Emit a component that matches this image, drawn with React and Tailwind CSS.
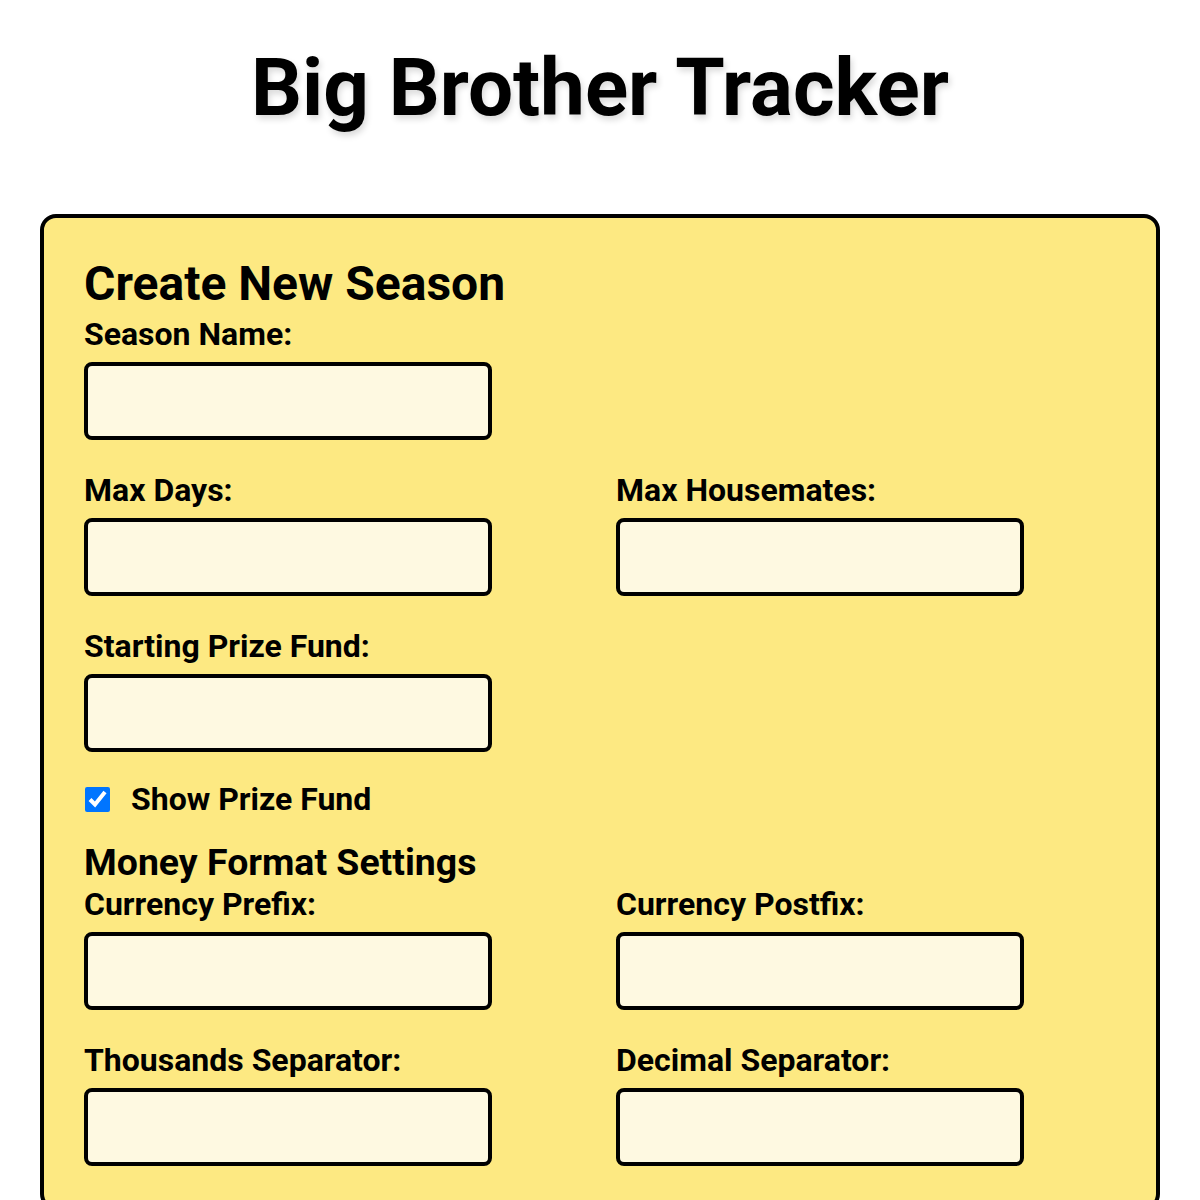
export default function App() {
  const Field = ({ label }) => (
    <div className="flex flex-col">
      <label className="text-[32px] font-bold leading-[37px]">{label}</label>
      <input type="text" className="mt-[9px] w-[408px] h-[78px] bg-[#fef9e1] border-[4px] border-black rounded-[8px] outline-none" />
    </div>
  );
  return (
    <div className="min-h-[1200px] bg-white text-black" style={{ fontFamily: "Roboto, 'Liberation Sans', sans-serif" }}>
      <h1 className="text-center text-[80px] font-bold leading-[94px] pt-[41px] [text-shadow:2px_4px_6px_rgba(0,0,0,0.15)]">Big Brother Tracker</h1>
      <div className="mx-[40px] mt-[79px] bg-[#fde982] border-[4px] border-black rounded-[16px] px-[40px] pt-[38px] pb-[40px]">
        <h2 className="text-[48px] font-bold leading-[56px]">Create New Season</h2>
        <div className="mt-[4px]">
          <Field label="Season Name:" />
        </div>
        <div className="grid grid-cols-[532px_1fr] mt-[32px]">
          <Field label="Max Days:" />
          <Field label="Max Housemates:" />
        </div>
        <div className="mt-[32px]">
          <Field label="Starting Prize Fund:" />
        </div>
        <div className="flex items-center mt-[29px]">
          <input type="checkbox" defaultChecked className="w-[25px] h-[25px] m-0 ml-[1px] accent-[#0075ff]" />
          <span className="ml-[21px] text-[32px] font-bold leading-[37px]">Show Prize Fund</span>
        </div>
        <h3 className="mt-[22px] text-[37.44px] font-bold leading-[44px]">Money Format Settings</h3>
        <div className="grid grid-cols-[532px_1fr] mt-[2px]">
          <Field label="Currency Prefix:" />
          <Field label="Currency Postfix:" />
        </div>
        <div className="grid grid-cols-[532px_1fr] mt-[32px]">
          <Field label="Thousands Separator:" />
          <Field label="Decimal Separator:" />
        </div>
      </div>
    </div>
  );
}
